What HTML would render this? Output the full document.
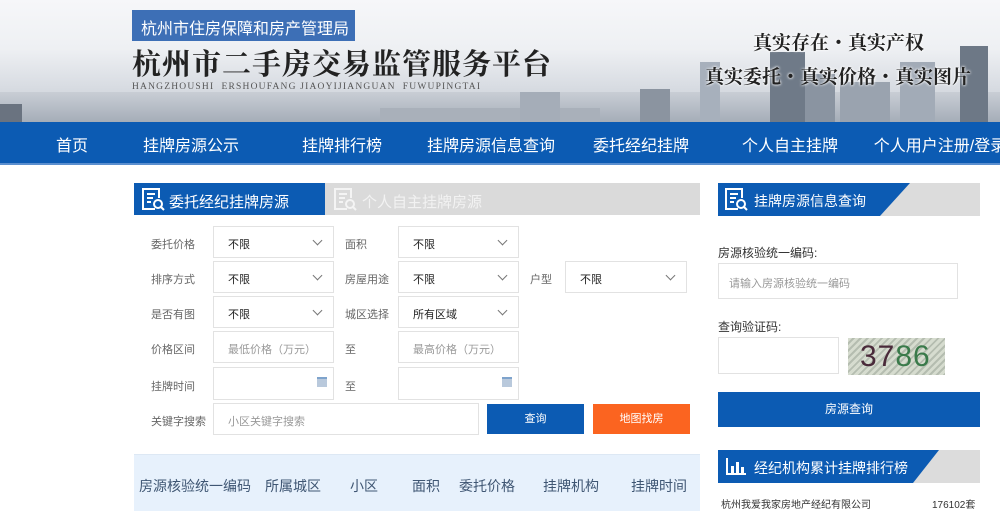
<!DOCTYPE html>
<html><head><meta charset="utf-8"><style>
*{margin:0;padding:0;box-sizing:border-box}
body{width:1000px;height:523px;overflow:hidden;background:#fff;font-family:"Liberation Sans","Noto Sans CJK SC",sans-serif;position:relative}
.a{position:absolute}
.hdr{left:0;top:0;width:1000px;height:122px;background:linear-gradient(180deg,#f6f7f9 0%,#eef0f3 40%,#d9dde3 70%,#c4c9d0 100%);overflow:hidden}
.b{position:absolute;bottom:0;background:#8f98a4}
.nav{left:0;top:122px;width:1000px;height:43px;background:#0c5bb3;border-bottom:2px solid #5b8fcf}
.nav span{position:absolute;top:10px;color:#fff;font-size:16px;white-space:nowrap;transform:translateX(-50%)}
.lbl{font-size:11px;color:#666}
.sel{border:1px solid #e2e2e2;background:#fff;height:32px;font-size:11px;color:#222;padding:9px 0 0 14px}
.sel i{position:absolute;right:12px;top:10px;width:7px;height:7px;border-right:1px solid #777;border-bottom:1px solid #777;transform:rotate(45deg)}
.ph{color:#999}
.cal{position:absolute;right:6px;top:9px;width:10px;height:10px;background:#b9c9dc;border-top:2px solid #7ea3cc}
.th{top:476px;font-size:14px;color:#3f5673;white-space:nowrap}
</style></head><body>
<div class="a hdr">
 <div class="b" style="left:0;width:1000px;height:30px;background:linear-gradient(180deg,#c9ced5,#a5adb8)"></div>
 <div class="b" style="left:0;width:22px;height:18px;background:#6a7380"></div>
 <div class="b" style="left:380px;width:220px;height:14px;background:#a9b0ba"></div>
 <div class="b" style="left:640px;width:30px;height:33px;background:#8b94a0"></div>
 <div class="b" style="left:700px;width:20px;height:60px;background:#a7b0bc"></div>
 <div class="b" style="left:770px;width:35px;height:70px;background:#6f7a88"></div>
 <div class="b" style="left:805px;width:30px;height:48px;background:#8a94a1"></div>
 <div class="b" style="left:840px;width:50px;height:40px;background:#9aa3af"></div>
 <div class="b" style="left:900px;width:35px;height:60px;background:#a2abb7"></div>
 <div class="b" style="left:960px;width:28px;height:76px;background:#6d7886"></div>
 <div class="b" style="left:520px;width:40px;height:30px;background:#a5adb8"></div>
</div>
<div class="a" style="left:132px;top:10px;width:223px;height:31px;background:#3d6fb6;color:#fff;font-size:16px;padding:5px 0 0 9px;white-space:nowrap;overflow:hidden">杭州市住房保障和房产管理局</div>
<div class="a" style="left:132px;top:42px;font-family:'Noto Serif CJK SC',serif;font-weight:bold;font-size:29px;color:#222;letter-spacing:1px;white-space:nowrap">杭州市二手房交易监管服务平台</div>
<div class="a" style="left:132px;top:82px;font-family:'Liberation Serif',serif;font-size:9.5px;color:#555;letter-spacing:1.2px;white-space:nowrap">HANGZHOUSHI&nbsp;&nbsp;ERSHOUFANG&nbsp;JIAOYIJIANGUAN&nbsp;&nbsp;FUWUPINGTAI</div>
<div class="a" style="left:753px;top:28px;font-family:'Noto Serif CJK SC',serif;font-weight:bold;font-size:19px;color:#222;text-shadow:0 0 3px #fff,0 0 2px #fff;white-space:nowrap">真实存在・真实产权</div>
<div class="a" style="left:705px;top:62px;font-family:'Noto Serif CJK SC',serif;font-weight:bold;font-size:19px;color:#222;text-shadow:0 0 3px #fff,0 0 2px #fff;white-space:nowrap">真实委托・真实价格・真实图片</div>
<div class="a nav">
 <span style="left:72px">首页</span><span style="left:191px">挂牌房源公示</span><span style="left:342px">挂牌排行榜</span><span style="left:491px">挂牌房源信息查询</span><span style="left:641px">委托经纪挂牌</span><span style="left:790px">个人自主挂牌</span><span style="left:940px">个人用户注册/登录</span>
</div>

<div class="a" style="left:134px;top:183px;width:191px;height:32px;background:#0c5bb3"></div>
<div class="a" style="left:325px;top:183px;width:375px;height:32px;background:#dadada"></div>
<svg class="a" style="left:140px;top:186px" width="26" height="26" viewBox="0 0 26 26" fill="none" stroke="#fff" stroke-width="2"><path d="M15 23H3V3h16v9"/><path d="M7 8h8M7 12h6M7 16h4"/><circle cx="18" cy="18" r="4"/><path d="M21 21l3 3"/></svg>
<div class="a" style="left:169px;top:191px;color:#fff;font-size:15px;white-space:nowrap">委托经纪挂牌房源</div>
<svg class="a" style="left:332px;top:186px" width="26" height="26" viewBox="0 0 26 26" fill="none" stroke="#f4f4f4" stroke-width="2"><path d="M15 23H3V3h16v9"/><path d="M7 8h8M7 12h6M7 16h4"/><circle cx="18" cy="18" r="4"/><path d="M21 21l3 3"/></svg>
<div class="a" style="left:362px;top:191px;color:#f2f2f2;font-size:15px;white-space:nowrap">个人自主挂牌房源</div>

<div class="a lbl" style="left:151px;top:236px">委托价格</div>
<div class="a sel" style="left:213px;top:226px;width:121px">不限<i></i></div>
<div class="a lbl" style="left:345px;top:236px">面积</div>
<div class="a sel" style="left:398px;top:226px;width:121px">不限<i></i></div>

<div class="a lbl" style="left:151px;top:271px">排序方式</div>
<div class="a sel" style="left:213px;top:261px;width:121px">不限<i></i></div>
<div class="a lbl" style="left:345px;top:271px">房屋用途</div>
<div class="a sel" style="left:398px;top:261px;width:121px">不限<i></i></div>
<div class="a lbl" style="left:530px;top:271px">户型</div>
<div class="a sel" style="left:565px;top:261px;width:122px">不限<i></i></div>

<div class="a lbl" style="left:151px;top:306px">是否有图</div>
<div class="a sel" style="left:213px;top:296px;width:121px">不限<i></i></div>
<div class="a lbl" style="left:345px;top:306px">城区选择</div>
<div class="a sel" style="left:398px;top:296px;width:121px">所有区域<i></i></div>

<div class="a lbl" style="left:151px;top:341px">价格区间</div>
<div class="a sel ph" style="left:213px;top:331px;width:121px">最低价格（万元）</div>
<div class="a lbl" style="left:345px;top:341px">至</div>
<div class="a sel ph" style="left:398px;top:331px;width:121px">最高价格（万元）</div>

<div class="a lbl" style="left:151px;top:378px">挂牌时间</div>
<div class="a sel" style="left:213px;top:367px;width:121px;height:33px"><span class="cal"></span></div>
<div class="a lbl" style="left:345px;top:378px">至</div>
<div class="a sel" style="left:398px;top:367px;width:121px;height:33px"><span class="cal"></span></div>

<div class="a lbl" style="left:151px;top:413px">关键字搜索</div>
<div class="a sel ph" style="left:213px;top:403px;width:266px">小区关键字搜索</div>
<div class="a" style="left:487px;top:404px;width:97px;height:30px;background:#0c5bb3;color:#fff;font-size:11px;text-align:center;line-height:30px">查询</div>
<div class="a" style="left:593px;top:404px;width:97px;height:30px;background:#fb6420;color:#fff;font-size:11px;text-align:center;line-height:30px">地图找房</div>

<div class="a" style="left:134px;top:454px;width:566px;height:57px;background:#e7f1fc;border-top:1px solid #dde8f4"></div>
<div class="a th" style="left:139px">房源核验统一编码</div>
<div class="a th" style="left:265px">所属城区</div>
<div class="a th" style="left:350px">小区</div>
<div class="a th" style="left:412px">面积</div>
<div class="a th" style="left:459px">委托价格</div>
<div class="a th" style="left:543px">挂牌机构</div>
<div class="a th" style="left:631px">挂牌时间</div>

<svg class="a" style="left:718px;top:183px" width="262" height="33"><rect width="262" height="33" fill="#dcdcdc"/><path d="M0 0H192L162 33H0Z" fill="#0c5bb3"/></svg>
<svg class="a" style="left:723px;top:186px" width="26" height="26" viewBox="0 0 26 26" fill="none" stroke="#fff" stroke-width="2"><path d="M15 23H3V3h16v9"/><path d="M7 8h8M7 12h6M7 16h4"/><circle cx="18" cy="18" r="4"/><path d="M21 21l3 3"/></svg>
<div class="a" style="left:754px;top:191px;color:#fff;font-size:14px;white-space:nowrap">挂牌房源信息查询</div>
<div class="a" style="left:718px;top:244px;font-size:12px;color:#333">房源核验统一编码:</div>
<div class="a" style="left:718px;top:263px;width:240px;height:36px;border:1px solid #e2e2e2;font-size:11px;color:#999;padding:11px 0 0 10px">请输入房源核验统一编码</div>
<div class="a" style="left:718px;top:318px;font-size:12px;color:#333">查询验证码:</div>
<div class="a" style="left:718px;top:337px;width:121px;height:37px;border:1px solid #e2e2e2"></div>
<div class="a" style="left:848px;top:338px;width:97px;height:37px;background:repeating-linear-gradient(135deg,#d6dccf 0 3px,#b5bdb0 3px 5px);font-size:30px;line-height:37px;padding-left:12px;letter-spacing:1px;white-space:nowrap"><span style="color:#4a2a3a">37</span><span style="color:#3a7a4a">86</span></div>
<div class="a" style="left:718px;top:392px;width:262px;height:35px;background:#0c5bb3;color:#fff;font-size:12px;text-align:center;line-height:35px">房源查询</div>
<svg class="a" style="left:718px;top:450px" width="262" height="33"><rect width="262" height="33" fill="#dcdcdc"/><path d="M0 0H221L195 33H0Z" fill="#0c5bb3"/></svg>
<svg class="a" style="left:726px;top:458px" width="20" height="18" fill="#fff"><rect x="0" y="0" width="2" height="17"/><rect x="0" y="15" width="20" height="2"/><rect x="5" y="8" width="3" height="7"/><rect x="10" y="4" width="3" height="11"/><rect x="15" y="9" width="3" height="6"/></svg>
<div class="a" style="left:754px;top:458px;color:#fff;font-size:14px;white-space:nowrap">经纪机构累计挂牌排行榜</div>
<div class="a" style="left:721px;top:496px;font-size:10px;color:#333;white-space:nowrap">杭州我爱我家房地产经纪有限公司</div>
<div class="a" style="left:932px;top:496px;font-size:10px;color:#333">176102套</div>
</body></html>
